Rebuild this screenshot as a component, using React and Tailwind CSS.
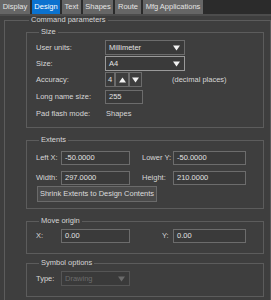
import React from "react";

function Arrow({ dim, up }) {
  return (
    <svg width="7" height="6" viewBox="0 0 7 6" className={dim ? "text-[#6a6a6a]" : "text-[#f2f2f2]"}>
      {up ? <path d="M0 5.5 L3.5 0.5 L7 5.5 Z" fill="currentColor" /> : <path d="M0 0.5 L7 0.5 L3.5 5.5 Z" fill="currentColor" />}
    </svg>
  );
}

function Group({ title, className, children }) {
  return (
    <fieldset className={"border border-[#5c5c5c] " + className}>
      <legend className="ml-[3px] px-[2px] leading-[10px] text-[#d6d6d6]">{title}</legend>
      {children}
    </fieldset>
  );
}

function Field({ value, className, dim }) {
  return (
    <div className={"h-[14px] border flex items-center px-[3px] leading-none " + (dim ? "border-[#555] text-[#6c6c6c]" : "border-[#6c6c6c] text-[#e2e2e2] bg-[#3a3a3a]") + " " + className}>
      {value}
    </div>
  );
}

function Select({ value, className, focus, dim }) {
  return (
    <div
      className={
        "h-[15px] border flex items-center justify-between pl-[3px] pr-[4px] leading-none bg-[#3a3a3a] " +
        (focus ? "border-[#9a9a9a] " : dim ? "border-[#555] " : "border-[#6c6c6c] ") +
        (dim ? "text-[#6c6c6c] " : "text-[#e2e2e2] ") +
        className
      }
    >
      <span>{value}</span>
      <Arrow dim={dim} />
    </div>
  );
}

function Row({ label, children, className }) {
  return (
    <div className={"flex items-center h-[15px] " + (className || "")}>
      <span className="w-[69px] shrink-0">{label}</span>
      {children}
    </div>
  );
}

const tabs = [
  ["Display", "w-[30px]"],
  ["Design", "w-[28px]"],
  ["Text", "w-[19px]"],
  ["Shapes", "w-[30px]"],
  ["Route", "w-[26px]"],
  ["Mfg Applications", "w-[60px]"],
];

export default function App() {
  return (
    <div className="w-[271px] h-[300px] overflow-hidden bg-[#3e3e3e] text-[#d6d6d6] text-[7.5px] font-['Liberation_Sans',Arial,sans-serif]">
      <div className="h-[14px] flex gap-[2px] bg-[#2b2b2b]">
        {tabs.map(([t, w]) => (
          <div
            key={t}
            className={
              w +
              " flex items-center justify-center " +
              (t === "Design" ? "bg-[#0b72cf] text-white" : "bg-[#666666] text-[#e4e4e4]")
            }
          >
            {t}
          </div>
        ))}
      </div>
      <div className="border-t-2 border-[#4c4c4c] pl-[4px]">
        <fieldset className="border border-[#5c5c5c] pl-[21px] pr-[6px] h-[300px]">
          <legend className="ml-[3px] px-[2px] leading-[8px]">Command parameters</legend>

          <Group title="Size" className="mt-[3px] pl-[9px] pt-[3px] pb-[6px]">
            <div className="flex flex-col gap-[1px]">
              <Row label="User units:">
                <Select value="Millimeter" className="w-[80px]" />
              </Row>
              <Row label="Size:">
                <Select value="A4" focus className="w-[80px]" />
              </Row>
              <Row label="Accuracy:">
                <div className="flex h-[15px]">
                  <div className="w-[10px] border border-[#6c6c6c] bg-[#3a3a3a] flex items-center pl-[2px] text-[#e2e2e2]">4</div>
                  <div className="w-[14px] border border-[#6c6c6c] flex items-center justify-center">
                    <Arrow up />
                  </div>
                  <div className="w-[13px] border border-[#6c6c6c] flex items-center justify-center">
                    <Arrow />
                  </div>
                </div>
                <span className="ml-[30px]">(decimal places)</span>
              </Row>
              <Row label="Long name size:" className="mt-[1px]">
                <Field value="255" className="w-[38px]" />
              </Row>
              <Row label="Pad flash mode:" className="mt-[1px]">
                <span className="pl-[1px]">Shapes</span>
              </Row>
            </div>
          </Group>

          <Group title="Extents" className="mt-[7px] pl-[9px] pt-[6px] pb-[6px]">
            <div className="flex flex-col gap-[6px]">
              <div className="flex items-center">
                <span className="w-[25px]">Left X:</span>
                <Field value="-50.0000" className="w-[69px]" />
                <span className="ml-[12px] w-[31px]">Lower Y:</span>
                <Field value="-50.0000" className="w-[73px]" />
              </div>
              <div className="flex items-center">
                <span className="w-[25px]">Width:</span>
                <Field value="297.0000" className="w-[69px]" />
                <span className="ml-[12px] w-[31px]">Height:</span>
                <Field value="210.0000" className="w-[73px]" />
              </div>
            </div>
            <button className="mt-[1px] ml-[1px] h-[16px] w-[120px] border border-[#6a6a6a] bg-[#4a4a4a] text-[#dcdcdc] flex items-center justify-center leading-none">
              Shrink Extents to Design Contents
            </button>
          </Group>

          <Group title="Move origin" className="mt-[7px] pl-[9px] pt-[3px] pb-[10px]">
            <div className="flex items-center">
              <span className="w-[25px]">X:</span>
              <Field value="0.00" className="w-[69px]" />
              <span className="ml-[32px] w-[11px]">Y:</span>
              <Field value="0.00" className="w-[73px]" />
            </div>
          </Group>

          <Group title="Symbol options" className="mt-[4px] pl-[9px] pt-[3px] pb-[10px]">
            <div className="flex items-center">
              <span className="w-[25px]">Type:</span>
              <Select value="Drawing" dim className="w-[69px]" />
            </div>
          </Group>
        </fieldset>
      </div>
    </div>
  );
}
